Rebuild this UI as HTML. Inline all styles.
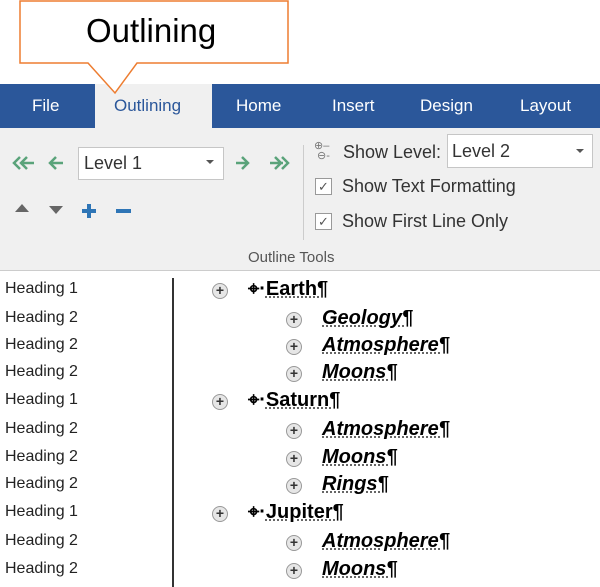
<!DOCTYPE html><html><head><style>
body{margin:0;width:600px;height:587px;background:#fff;position:relative;overflow:hidden;font-family:"Liberation Sans",sans-serif}
.a{position:absolute}
.tab{position:absolute;top:84px;height:44px;line-height:44px;color:#fff;font-size:17px}
.hd{position:absolute;left:5px;font-size:16px;color:#222}
.t{position:absolute;font-weight:bold;font-size:20px;color:#000;white-space:nowrap}
.t i,.t b{text-decoration:underline dotted #666}
.pl{position:absolute;width:14px;height:14px;border:1px solid #999;border-radius:50%;background:#e6e6e6;font-size:14px;line-height:13px;text-align:center;color:#333;font-weight:bold}
.cb{position:absolute;width:15px;height:15px;border:1px solid #999;background:#fff;font-size:13px;line-height:15px;text-align:center;color:#555}
.rt{position:absolute;font-size:18px;color:#333}
</style></head><body>
<div class="a" style="left:0;top:84px;width:600px;height:44px;background:#2b579a"></div>
<div class="a" style="left:95px;top:84px;width:117px;height:44px;background:#f0f0f0"></div>
<div class="tab" style="left:32px">File</div>
<div class="tab" style="left:114px;color:#2b579a">Outlining</div>
<div class="tab" style="left:236px">Home</div>
<div class="tab" style="left:332px">Insert</div>
<div class="tab" style="left:420px">Design</div>
<div class="tab" style="left:520px">Layout</div>
<div class="a" style="left:0;top:128px;width:600px;height:142px;background:#f0f0f0;border-bottom:1px solid #ccc"></div>
<svg class="a" style="left:0;top:0" width="600" height="110"><path d="M20 1H288V63H137L115 93L88 63H20Z" fill="#fff" stroke="#ed7d31" stroke-width="1.5"/></svg>
<div class="a" style="left:86px;top:12px;font-size:33px;color:#000">Outlining</div>
<svg class="a" style="left:0;top:140px" width="300" height="50" fill="none" stroke="#5aa37a" stroke-width="2.5">
<path d="M20 17l-6 6 6 6M27 17l-6 6 6 6M21 23h13"/>
<path d="M56 17l-6 6 6 6M50 23h13"/>
<path d="M242 17l6 6-6 6M236 23h12"/>
<path d="M275 17l6 6-6 6M282 17l6 6-6 6M270 23h13"/>
</svg>
<div class="a" style="left:78px;top:147px;width:144px;height:31px;background:#fff;border:1px solid #c6c6c6"></div>
<div class="rt" style="left:84px;top:153px">Level 1</div>
<div class="a" style="left:206px;top:160px;border:4px solid transparent;border-top:4px solid #555"></div>
<div class="a" style="left:15px;top:204px;border:7px solid transparent;border-bottom:8px solid #666;border-top:0"></div>
<div class="a" style="left:49px;top:206px;border:7px solid transparent;border-top:8px solid #666;border-bottom:0"></div>
<div class="a" style="left:82px;top:209px;width:14px;height:4px;background:#2e75b6"></div>
<div class="a" style="left:87px;top:204px;width:4px;height:14px;background:#2e75b6"></div>
<div class="a" style="left:116px;top:209px;width:15px;height:4px;background:#2e75b6"></div>
<div class="a" style="left:303px;top:145px;width:1px;height:95px;background:#ccc"></div>
<div class="a" style="left:314px;top:141px;font-size:11px;color:#777;line-height:10px">⊕‒<br>&nbsp;⊖-</div>
<div class="rt" style="left:343px;top:142px">Show Level:</div>
<div class="a" style="left:447px;top:134px;width:144px;height:32px;background:#fff;border:1px solid #c6c6c6"></div>
<div class="rt" style="left:452px;top:141px">Level 2</div>
<div class="a" style="left:576px;top:149px;border:4px solid transparent;border-top:4px solid #555"></div>
<div class="cb" style="left:315px;top:178px">✓</div>
<div class="rt" style="left:342px;top:176px">Show Text Formatting</div>
<div class="cb" style="left:315px;top:213px">✓</div>
<div class="rt" style="left:342px;top:211px">Show First Line Only</div>
<div class="a" style="left:248px;top:249px;font-size:15px;color:#555">Outline Tools</div>
<div class="a" style="left:172px;top:278px;width:2px;height:309px;background:#333"></div>
<div class="hd" style="top:280px">Heading 1</div>
<div class="hd" style="top:309px">Heading 2</div>
<div class="hd" style="top:336px">Heading 2</div>
<div class="hd" style="top:363px">Heading 2</div>
<div class="hd" style="top:391px">Heading 1</div>
<div class="hd" style="top:420px">Heading 2</div>
<div class="hd" style="top:448px">Heading 2</div>
<div class="hd" style="top:475px">Heading 2</div>
<div class="hd" style="top:503px">Heading 1</div>
<div class="hd" style="top:532px">Heading 2</div>
<div class="hd" style="top:560px">Heading 2</div>
<div class="pl" style="left:212px;top:283px">+</div><div class="t" style="left:248px;top:278px">⌖·<b>Earth¶</b></div>
<div class="pl" style="left:286px;top:312px">+</div><div class="t" style="left:322px;top:307px"><i>Geology¶</i></div>
<div class="pl" style="left:286px;top:339px">+</div><div class="t" style="left:322px;top:334px"><i>Atmosphere¶</i></div>
<div class="pl" style="left:286px;top:366px">+</div><div class="t" style="left:322px;top:361px"><i>Moons¶</i></div>
<div class="pl" style="left:212px;top:394px">+</div><div class="t" style="left:248px;top:389px">⌖·<b>Saturn¶</b></div>
<div class="pl" style="left:286px;top:423px">+</div><div class="t" style="left:322px;top:418px"><i>Atmosphere¶</i></div>
<div class="pl" style="left:286px;top:451px">+</div><div class="t" style="left:322px;top:446px"><i>Moons¶</i></div>
<div class="pl" style="left:286px;top:478px">+</div><div class="t" style="left:322px;top:473px"><i>Rings¶</i></div>
<div class="pl" style="left:212px;top:506px">+</div><div class="t" style="left:248px;top:501px">⌖·<b>Jupiter¶</b></div>
<div class="pl" style="left:286px;top:535px">+</div><div class="t" style="left:322px;top:530px"><i>Atmosphere¶</i></div>
<div class="pl" style="left:286px;top:563px">+</div><div class="t" style="left:322px;top:558px"><i>Moons¶</i></div>
</body></html>
